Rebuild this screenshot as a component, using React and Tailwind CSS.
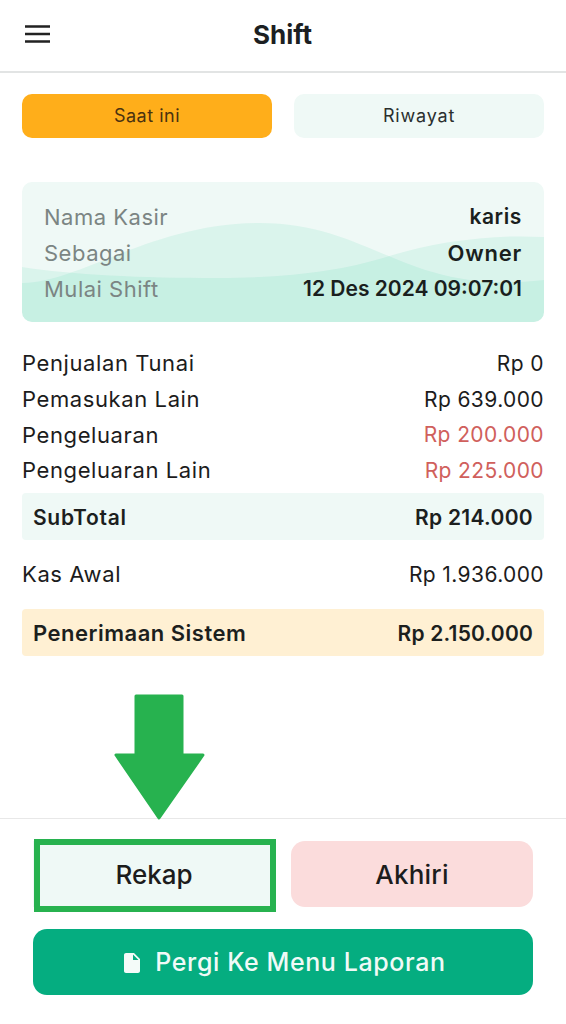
import React from 'react';

const font = { fontFamily: '"Inter", "Noto Sans", sans-serif' };

// --- VISUAL COMPONENTS ---
const Row = ({ label, value, valueClass = 'text-[#1c1c1c]' }) => (
  <div className="flex justify-between items-center h-[35.7px] text-[#1c1c1c]">
    <span className="text-[22px] tracking-[0.6px]">{label}</span>
    <span className={`text-[21px] tracking-[0.4px] ${valueClass}`}>{value}</span>
  </div>
);

const InfoRow = ({ label, value, valueClass = 'text-[21px] tracking-[0.6px]' }) => (
  <div className="flex justify-between items-center h-9">
    <span className="text-[22px] tracking-[0.5px] text-[#7b8583]">{label}</span>
    <span className={`font-semibold text-[#1a1f1e] ${valueClass}`}>{value}</span>
  </div>
);

const Waves = () => (
  <svg className="absolute inset-0 w-full h-full" viewBox="0 0 522 140" preserveAspectRatio="none">
    <path d="M0 101C60 100 130 41 238 41C320 41 360 80 430 95C470 103 500 100 522 98V140H0Z" fill="#00c090" fillOpacity="0.085" />
    <path d="M0 85C50 93 120 96 195 96C270 96 320 88 361 76C410 60 470 52 522 55V140H0Z" fill="#00c090" fillOpacity="0.085" />
  </svg>
);

// --- MAIN APP ---
export default function App() {
  return (
    <div className="relative h-[1024px] flex flex-col bg-white overflow-hidden" style={font}>
      <header className="h-[73px] shrink-0 flex items-center justify-center relative border-b-2 border-[#e2e4e4]">
        <svg className="absolute left-[25px] top-[25px]" width="25" height="18" viewBox="0 0 25 18">
          <path d="M0 1.5H25M0 9H25M0 16.500H25" stroke="#222" strokeWidth="2.600" />
        </svg>
        <h1 className="text-[26px] font-bold text-[#1c1f22] -mt-[3px] -ml-[1px]">Shift</h1>
      </header>

      <main className="flex-1 px-[22px]">
        <div className="flex gap-[22px] mt-[21px]">
          <button className="flex-1 h-11 pb-[1px] rounded-[10px] bg-[#ffae1a] text-[18px] tracking-[0.5px] text-[#4a3210]">Saat ini</button>
          <button className="flex-1 h-11 pb-[1px] rounded-[10px] bg-[#eff9f6] text-[18px] tracking-[0.8px] text-[#2a2f2e]">Riwayat</button>
        </div>

        <section className="relative mt-11 h-[140px] rounded-[10px] bg-[#eff9f6] overflow-hidden">
          <Waves />
          <div className="relative pt-[17px] px-[22px]">
            <InfoRow label="Nama Kasir" value="karis" />
            <InfoRow label="Sebagai" value="Owner" valueClass="text-[22px] tracking-[0.8px]" />
            <InfoRow label="Mulai Shift" value="12 Des 2024 09:07:01" valueClass="text-[21px] tracking-[0px]" />
          </div>
        </section>

        <div className="mt-[24px]">
          <Row label="Penjualan Tunai" value="Rp 0" />
          <Row label="Pemasukan Lain" value="Rp 639.000" />
          <Row label="Pengeluaran" value="Rp 200.000" valueClass="text-[#d0605c]" />
          <Row label="Pengeluaran Lain" value="Rp 225.000" valueClass="text-[#d0605c]" />
        </div>

        <div className="mt-[4px] h-[47px] pt-[2px] px-[11px] flex justify-between items-center rounded-[4px] bg-[#eff9f6] font-semibold text-[#1c1f1e]">
          <span className="text-[21px] tracking-[0.7px]">SubTotal</span>
          <span className="text-[21px] tracking-[0.3px]">Rp 214.000</span>
        </div>

        <div className="mt-[17px]">
          <Row label="Kas Awal" value="Rp 1.936.000" />
        </div>

        <div className="mt-[17px] h-[47px] pt-[1px] px-[11px] flex justify-between items-center rounded-[4px] bg-[#fff0d3] font-semibold text-[#1c1f1e]">
          <span className="text-[22px] tracking-[0.5px]">Penerimaan Sistem</span>
          <span className="text-[21px] tracking-[0.2px]">Rp 2.150.000</span>
        </div>
      </main>

      <footer className="h-[206px] shrink-0 border-t border-[#e8e8e8] px-[33px] pt-[22px]">
        <div className="flex gap-[16px]">
          <div className="relative flex-1">
            <button className="w-full h-[66px] flex items-center justify-center text-[26px] font-medium text-[#1c1c1c] bg-[#eff9f6]">Rekap</button>
            <div className="absolute left-[1px] -top-[2px] w-[242px] h-[73px] border-[6px] border-[#27b24f]" />
          </div>
          <button className="flex-1 h-[66px] rounded-[14px] bg-[#fbdcdc] flex items-center justify-center text-[26px] tracking-[0.2px] font-medium text-[#1c1c1c]">Akhiri</button>
        </div>
        <button className="mt-[22px] w-full h-[66px] pt-[2px] rounded-[14px] bg-[#05ad80] flex items-center justify-center gap-[11px] text-[25px] font-medium tracking-[0.6px] text-[#f0faf7]">
          <svg width="24" height="24" viewBox="0 0 24 24" fill="#f4fbf9">
            <path d="M6 2c-1.100 0-1.990.9-1.990 2L4 20c0 1.100.89 2 1.990 2H18c1.100 0 2-.9 2-2V8l-6-6H6zm7 7V3.500L18.500 9H13z" />
          </svg>
          <span>Pergi Ke Menu Laporan</span>
        </button>
      </footer>

      <svg className="absolute left-[113px] top-[694px]" width="93" height="127" viewBox="0 0 93 127">
        <path d="M23 2H69V61H90L46 124L3 61H23Z" fill="#27b24f" stroke="#27b24f" strokeWidth="3" strokeLinejoin="round" />
      </svg>
    </div>
  );
}
